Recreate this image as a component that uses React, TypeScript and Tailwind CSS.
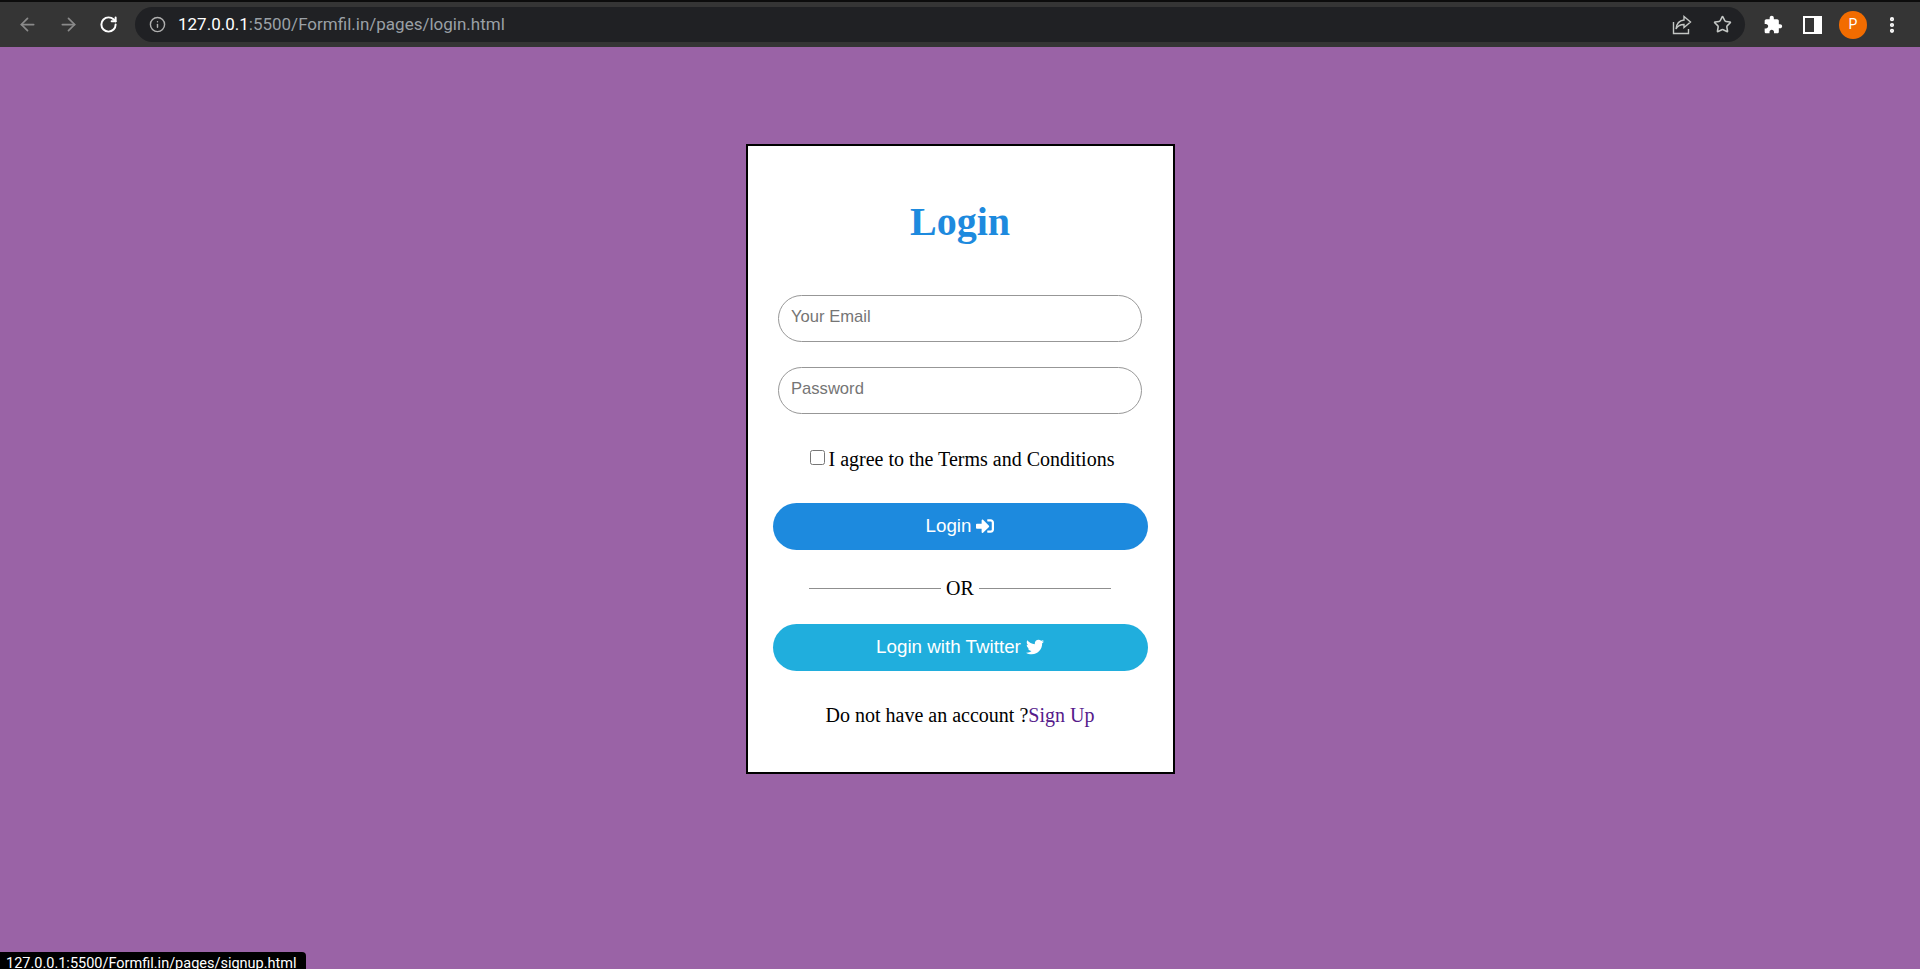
import { ArrowLeft, ArrowRight, RotateCw, Info, Star, MoreVertical } from "lucide-react";
import { FaSignInAlt, FaTwitter } from "react-icons/fa";

function Toolbar() {
	return (
		<div className="h-[47px] shrink-0 bg-[#353535] border-t-2 border-[#0c0c0c] flex items-center font-['Roboto',sans-serif]">
			<div className="w-[135px] shrink-0 flex items-center pl-[17px] gap-[20px]">
				<ArrowLeft size={21} className="text-[#8a8a8a]" />
				<ArrowRight size={21} className="text-[#8a8a8a]" />
				<RotateCw size={19} strokeWidth={2.5} className="text-white" />
			</div>
			<div className="w-[1610px] h-[35px] rounded-full bg-[#202124] flex items-center pl-[14px] pr-[13px]">
				<Info size={17} className="text-[#b0b0b0]" />
				<div className="ml-[12px] text-[17px] text-[#9aa0a6]">
					<span className="text-white">127.0.0.1</span>:5500/Formfil.in/pages/login.html
				</div>
				<div className="ml-auto flex items-center gap-[21px] text-[#c4c7c5]">
					<svg width="20" height="20" viewBox="0 0 20 20" fill="none" stroke="currentColor" strokeWidth="1.4">
						<path d="M1.5 7v11.5h15V14" />
						<path d="M12 1.5l6.5 5.5-6.5 5.5V9.5c-4 0-6.5 1.5-8 4.5 .5-5 3.5-8.5 8-9z" />
					</svg>
					<Star size={19} strokeWidth={2} />
				</div>
			</div>
			<div className="flex-1 flex items-center pl-[18px] text-white">
				<svg width="20" height="20" viewBox="0 0 24 24" fill="currentColor">
					<path d="M20.5 11H19V7c0-1.1-.9-2-2-2h-4V3.5C13 2.12 11.88 1 10.5 1S8 2.12 8 3.5V5H4c-1.1 0-1.99.9-1.99 2v3.8H3.5c1.49 0 2.7 1.21 2.7 2.7s-1.21 2.7-2.7 2.7H2V20c0 1.1.9 2 2 2h3.8v-1.5c0-1.49 1.21-2.7 2.7-2.7 1.49 0 2.7 1.21 2.7 2.7V22H17c1.1 0 2-.9 2-2v-4h1.5c1.38 0 2.5-1.12 2.5-2.5S21.88 11 20.5 11z" />
				</svg>
				<div className="ml-[20px] w-[19px] h-[18px] bg-white pl-[2px] pt-[2px]">
					<div className="w-[9px] h-[14px] bg-[#353535]" />
				</div>
				<div className="ml-[17px] w-[28px] h-[28px] rounded-full bg-[#f26c00] flex items-center justify-center text-[14px]">P</div>
				<MoreVertical size={20} strokeWidth={3} className="ml-[15px]" />
			</div>
		</div>
	);
}

function LoginCard() {
	return (
		<div className="w-[429px] h-[630px] mx-auto mt-[97px] bg-white border-2 border-black flex flex-col items-center font-['Liberation_Serif',serif] text-black">
			<h1 className="mt-[53px] h-[46px] leading-[46px] text-[40px] font-bold text-[#1d8ade]">Login</h1>
			<input
				type="text"
				placeholder="Your Email"
				className="mt-[50px] w-[364px] h-[47px] rounded-[24px] border border-[#979797] pl-[12px] pb-[3px] text-[16.6px] font-['Liberation_Sans',sans-serif] placeholder:text-[#757575] outline-none"
			/>
			<input
				type="password"
				placeholder="Password"
				className="mt-[25px] w-[364px] h-[47px] rounded-[24px] border border-[#979797] pl-[12px] pb-[3px] text-[16.6px] font-['Liberation_Sans',sans-serif] placeholder:text-[#757575] outline-none"
			/>
			<label className="mt-[33px] ml-[4px] h-[24px] flex items-center text-[20px] leading-[24px]">
				<input type="checkbox" className="w-[15px] h-[15px] mr-[4px] mb-[3px]" />
				I agree to the Terms and Conditions
			</label>
			<button className="mt-[32px] w-[375px] h-[47px] shrink-0 rounded-[24px] bg-[#1d8ade] text-white text-[18.8px] font-['Liberation_Sans',sans-serif] flex items-center justify-center gap-[5px]">
				Login <FaSignInAlt size={18} className="mb-[2px]" />
			</button>
			<div className="mt-[26px] h-[24px] flex items-center gap-[5px] text-[20px] leading-[24px]">
				<div className="w-[132px] h-px bg-[#8f8f8f]" />
				OR
				<div className="w-[132px] h-px bg-[#8f8f8f]" />
			</div>
			<button className="mt-[24px] w-[375px] h-[47px] shrink-0 rounded-[24px] bg-[#20aedd] text-white text-[18.8px] font-['Liberation_Sans',sans-serif] flex items-center justify-center gap-[5px]">
				Login with Twitter <FaTwitter size={18} className="mb-[2px]" />
			</button>
			<p className="mt-[32px] text-[20px] leading-[24px]">
				Do not have an account ?<a className="text-[#551a8b]">Sign Up</a>
			</p>
		</div>
	);
}

export default function App() {
	return (
		<div className="relative h-screen overflow-hidden flex flex-col bg-[#9a63a6]">
			<Toolbar />
			<LoginCard />
			<div className="absolute left-0 bottom-0 w-[306px] h-[17px] bg-black rounded-tr-[4px] overflow-hidden pl-[6px] text-white text-[14.5px] leading-[24px] font-['Roboto',sans-serif]">
				127.0.0.1:5500/Formfil.in/pages/signup.html
			</div>
		</div>
	);
}
